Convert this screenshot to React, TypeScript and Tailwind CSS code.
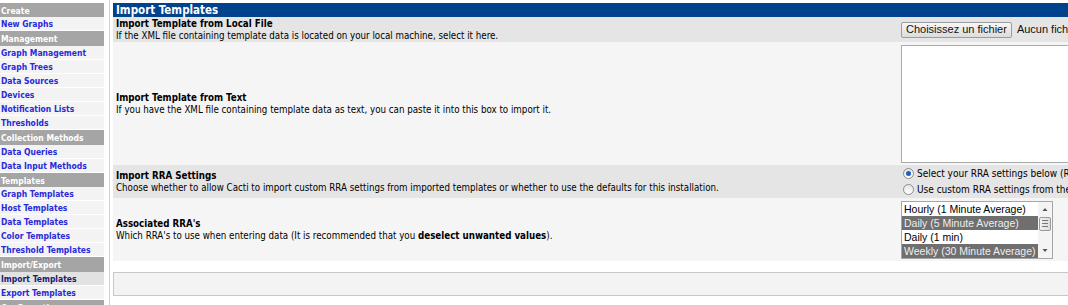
import React from "react";

const sections: { title: string; tall: boolean; items: string[] }[] = [
  { title: "Create", tall: false, items: ["New Graphs"] },
  {
    title: "Management",
    tall: true,
    items: ["Graph Management", "Graph Trees", "Data Sources", "Devices", "Notification Lists", "Thresholds"],
  },
  { title: "Collection Methods", tall: true, items: ["Data Queries", "Data Input Methods"] },
  {
    title: "Templates",
    tall: false,
    items: ["Graph Templates", "Host Templates", "Data Templates", "Color Templates", "Threshold Templates"],
  },
  { title: "Import/Export", tall: true, items: ["Import Templates", "Export Templates"] },
  { title: "Configuration", tall: true, items: ["Settings", "Plugin Management"] },
];

function Sidebar() {
  return (
    <nav className="w-[104px] shrink-0 flex flex-col pt-[3px]">
      {sections.map((s) => (
        <div key={s.title} className="flex flex-col">
          <div
            className={
              s.tall
                ? "h-[15px] bg-[#a5a5a5] text-white font-bold text-[8.5px] leading-[16px] pl-[1px] whitespace-nowrap"
                : "h-[14px] bg-[#a5a5a5] text-white font-bold text-[8.5px] leading-[16px] pl-[1px] whitespace-nowrap"
            }
          >
            {s.title}
          </div>
          {s.items.map((it) => {
            const current = it === "Import Templates";
            return (
              <div
                key={it}
                className={
                  current
                    ? "h-[14px] bg-[#e2e2e2] border-b border-white text-[#1a1a70] font-bold text-[8.5px] leading-[15px] pl-[1px] whitespace-nowrap"
                    : "h-[14px] bg-[#f3f3f3] border-b border-white text-[#2a2ad8] font-bold text-[8.5px] leading-[15px] pl-[1px] whitespace-nowrap"
                }
              >
                {it}
              </div>
            );
          })}
        </div>
      ))}
    </nav>
  );
}

function Radio({ checked }: { checked?: boolean }) {
  return (
    <span className="w-[11px] h-[11px] rounded-full border border-[#8c8c8c] bg-gradient-to-b from-[#e4e4e4] to-[#ffffff] flex items-center justify-center shrink-0">
      {checked && <span className="w-[5px] h-[5px] rounded-full bg-[#1d5fc4]" />}
    </span>
  );
}

function Label({ title, desc }: { title: string; desc: React.ReactNode }) {
  return (
    <div className="w-[785px] shrink-0 pl-[3px] pt-[1px] flex flex-col justify-center text-[9.7px] leading-[12px] text-black">
      <span className="font-bold">{title}</span>
      <span>{desc}</span>
    </div>
  );
}

function RRAList() {
  const items = [
    { t: "Hourly (1 Minute Average)", s: false },
    { t: "Daily (5 Minute Average)", s: true },
    { t: "Daily (1 min)", s: false },
    { t: "Weekly (30 Minute Average)", s: true },
  ];
  return (
    <div className="w-[152px] h-[58px] border border-[#a6a6a6] bg-white flex font-['Liberation_Sans',Arial,sans-serif] text-[10.5px]">
      <div className="flex-1 flex flex-col">
        {items.map((i) => (
          <div
            key={i.t}
            className={
              i.s
                ? "h-[14px] leading-[14px] px-[2px] bg-[#6f6f6f] text-[#eeeeee] whitespace-nowrap"
                : "h-[14px] leading-[14px] px-[2px] text-black whitespace-nowrap"
            }
          >
            {i.t}
          </div>
        ))}
      </div>
      <div className="w-[14px] bg-[#f4f4f4] flex flex-col items-center">
        <svg width="14" height="14" viewBox="0 0 14 14" className="shrink-0">
          <path d="M4.5 9 L7 6 L9.5 9 Z" fill="#555" />
        </svg>
        <div className="w-[12px] h-[14px] mt-[1px] rounded-[2px] border border-[#9a9a9a] bg-gradient-to-r from-[#f2f2f2] to-[#dedede] flex flex-col items-center justify-center gap-[2px]">
          <span className="w-[6px] h-px bg-[#777]" />
          <span className="w-[6px] h-px bg-[#777]" />
          <span className="w-[6px] h-px bg-[#777]" />
        </div>
        <div className="flex-1" />
        <svg width="14" height="14" viewBox="0 0 14 14" className="shrink-0">
          <path d="M4.5 5 L7 8 L9.5 5 Z" fill="#555" />
        </svg>
      </div>
    </div>
  );
}

export default function App() {
  return (
    <div className="w-[1068px] h-[305px] overflow-hidden bg-white flex font-['DejaVu_Sans_Condensed','DejaVu_Sans',sans-serif]">
      <Sidebar />
      <div className="ml-[5px] border-l border-[#cfcfcf] pl-[3px] flex-1 min-w-0 overflow-hidden">
        <div className="w-[1500px] pt-[3px] flex flex-col">
          <div className="h-[14px] bg-[#00438c] text-white font-bold text-[11.5px] leading-[15px] pl-[3px]">
            Import Templates
          </div>
          <div className="h-[25px] bg-[#e5e5e5] flex">
            <Label
              title="Import Template from Local File"
              desc="If the XML file containing template data is located on your local machine, select it here."
            />
            <div className="pl-[3px] flex items-center gap-[5px] font-['Liberation_Sans',Arial,sans-serif] text-[11px] whitespace-nowrap">
              <span className="h-[16px] px-[4px] flex items-center border border-[#9d9d9d] rounded-[2px] bg-gradient-to-b from-[#f7f7f7] to-[#dcdcdc] text-[#111]">
                Choisissez un fichier
              </span>
              <span className="text-[#111]">Aucun fichier choisi</span>
            </div>
          </div>
          <div className="h-[123px] bg-[#f5f5f5] flex">
            <Label
              title="Import Template from Text"
              desc="If you have the XML file containing template data as text, you can paste it into this box to import it."
            />
            <div className="pl-[3px] flex items-center">
              <textarea className="w-[420px] h-[118px] border border-[#ababab] bg-white resize-none" />
            </div>
          </div>
          <div className="h-[33px] bg-[#e5e5e5] flex">
            <Label
              title="Import RRA Settings"
              desc="Choose whether to allow Cacti to import custom RRA settings from imported templates or whether to use the defaults for this installation."
            />
            <div className="pl-[5px] flex flex-col justify-center text-[10px] leading-[16px] text-black whitespace-nowrap">
              <div className="flex items-center gap-[3px]">
                <Radio checked />
                <span>Select your RRA settings below (Recommended)</span>
              </div>
              <div className="flex items-center gap-[3px]">
                <Radio />
                <span>Use custom RRA settings from the template</span>
              </div>
            </div>
          </div>
          <div className="h-[63px] bg-[#f5f5f5] flex">
            <Label
              title="Associated RRA's"
              desc={
                <>
                  Which RRA's to use when entering data (It is recommended that you{" "}
                  <b>deselect unwanted values</b>).
                </>
              }
            />
            <div className="pl-[3px] flex items-center">
              <RRAList />
            </div>
          </div>
          <div className="mt-[11px] h-[24px] border border-[#c8c8c8] bg-[#f3f3f3]" />
        </div>
      </div>
    </div>
  );
}
